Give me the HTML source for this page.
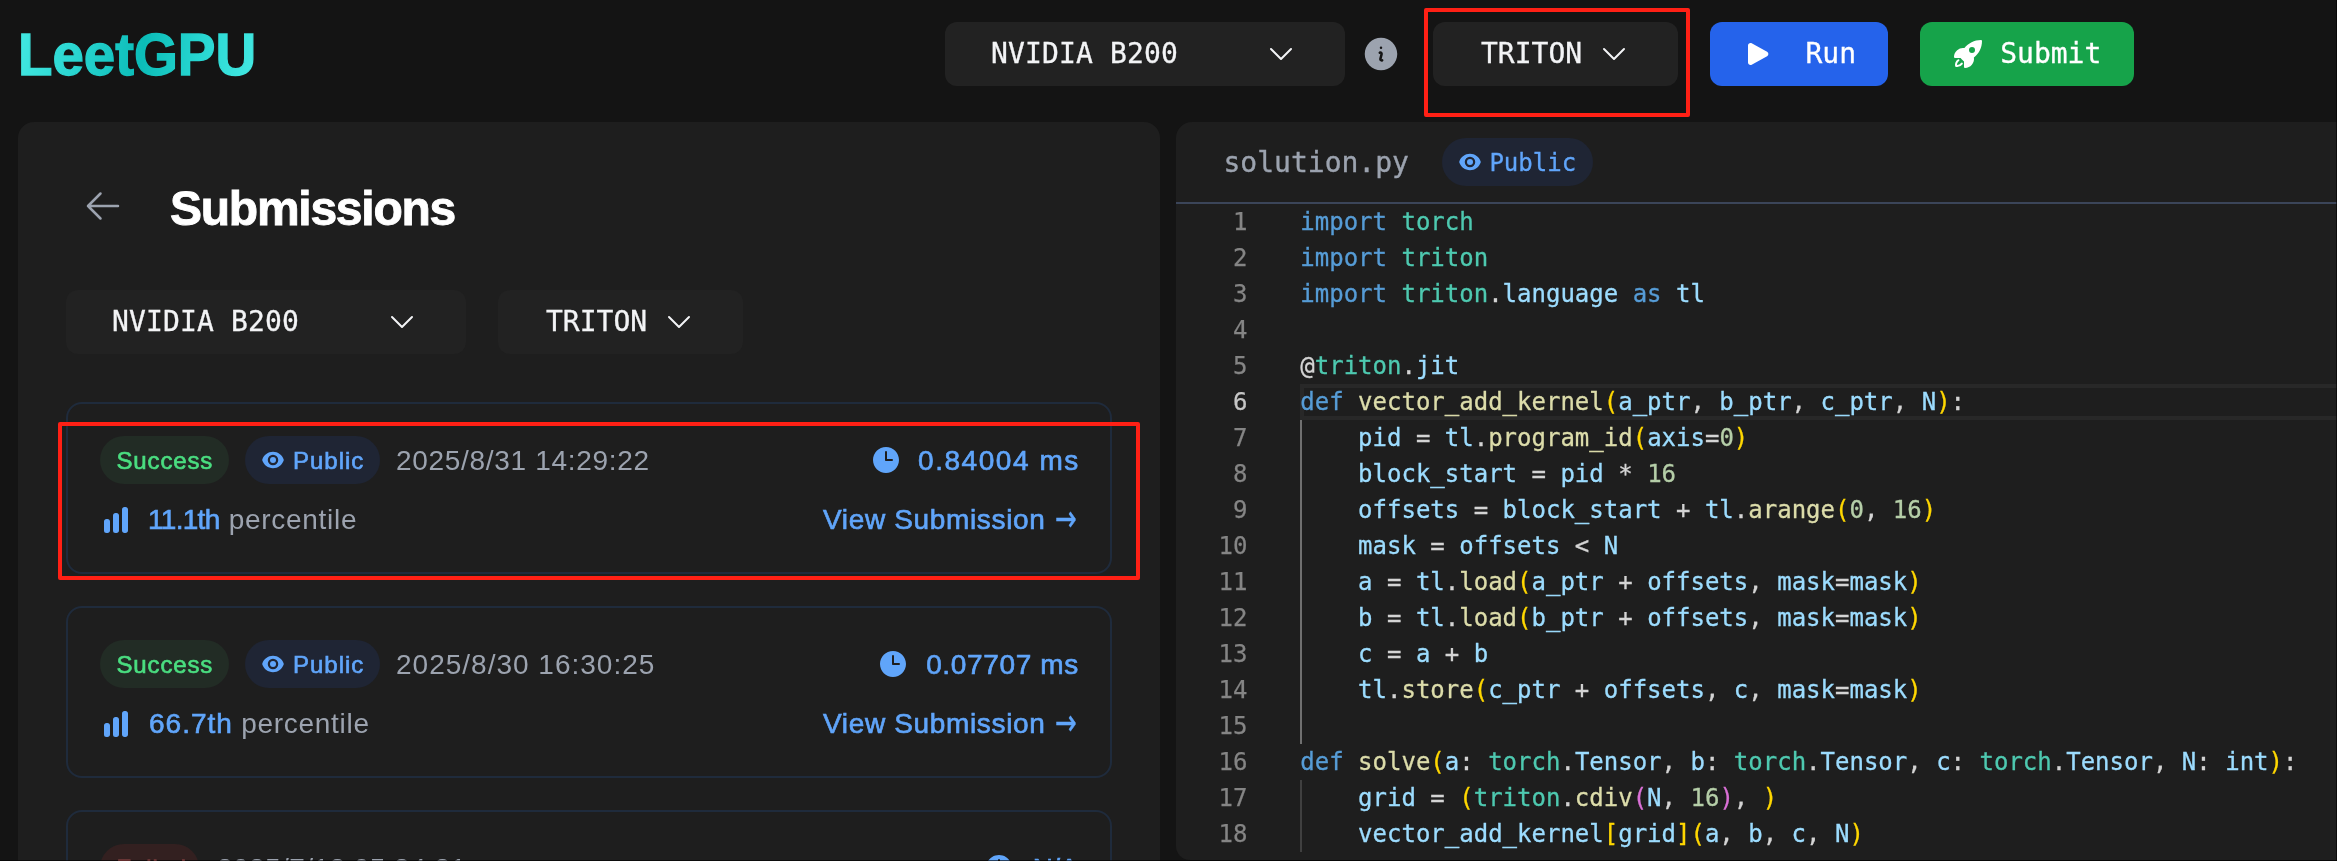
<!DOCTYPE html>
<html lang="en">
<head>
<meta charset="utf-8">
<title>LeetGPU</title>
<style>
*{box-sizing:border-box;margin:0;padding:0}
html,body{width:2338px;height:862px;overflow:hidden;background:#141414}
body{position:relative;will-change:transform;font-family:"Liberation Sans",sans-serif;color:#f3f4f6}
.abs{position:absolute}
.mono{font-family:"DejaVu Sans Mono","Liberation Mono",monospace}
.dd .t,.btn .t{-webkit-text-stroke:.3px currentColor}
.t{position:absolute;white-space:pre;line-height:1}
#logo{left:18.300px;top:21.200px;font-size:59.500px;font-weight:700;line-height:68px;height:68px;
  background:linear-gradient(100deg,#43e8e2 0%,#2ad6d1 25%,#0bbcb8 52%,#27d6d1 75%,#45eae4 100%);
  -webkit-background-clip:text;background-clip:text;color:transparent;-webkit-text-stroke:1.4px transparent;transform-origin:0 0;transform:scaleX(.948)}
.dd{position:absolute;height:64px;border-radius:12px;background:#222222}
.dd .t{font-size:28px;top:18px;color:#f3f4f6}
.dd svg{position:absolute;top:16px;width:32px;height:32px}
.btn{position:absolute;top:22px;height:64px;border-radius:12px}
.btn .t{font-size:28px;top:18px;color:#fff}
.redbox{position:absolute;border:4px solid #ff2015;border-radius:2px}
.panel{position:absolute;background:#1e1e1e}
#left{left:18px;top:122px;width:1142px;height:760px;border-radius:16px}
#right{left:1176px;top:122px;width:1180px;height:738px;border-radius:16px 0 0 14px;overflow:hidden}
h1{position:absolute;left:170px;top:180.7px;font-size:48px;font-weight:700;line-height:56px;color:#fff;letter-spacing:-1.25px;white-space:pre;-webkit-text-stroke:.9px #fff}
.card{position:absolute;left:66px;width:1046px;height:172px;border:2px solid #1f2b3c;border-radius:16px}
.badge{position:absolute;height:48px;border-radius:24px}
.badge .t{font-size:24px;top:12.8px}
.s28{font-size:28px}
.blue{color:#60a5fa}
.gray{color:#9ca3af}
.med{-webkit-text-stroke:.65px currentColor}
.arr{-webkit-text-stroke:.5px currentColor;font-family:"DejaVu Sans",sans-serif;font-size:36px;transform-origin:0 50%;transform:scaleX(.72)}
#code{position:absolute;left:0;top:82px;width:1180px;height:700px}
.ln{-webkit-text-stroke:.25px currentColor;position:absolute;left:0;width:71.500px;text-align:right;font-size:24px;line-height:36px;height:36px;color:#858585}
.cl{position:absolute;left:124.300px;-webkit-text-stroke:.3px currentColor;font-size:24px;line-height:36px;height:36px;white-space:pre;color:#d4d4d4}
.k{color:#569cd6}.m{color:#4ec9b0}.v{color:#9cdcfe}.f{color:#dcdcaa}.n{color:#b5cea8}
.b1{color:#ffd700}.b2{color:#da70d6}
.guide{position:absolute;left:124px;width:2px;background:#404040}
.ln.cur{color:#c6c6c6}
</style>
</head>
<body>
<div id="logo" class="t">LeetGPU</div>
<div class="dd" style="left:945px;top:22px;width:400px">
  <div class="t mono" style="left:46px;letter-spacing:.15px">NVIDIA B200</div>
  <svg style="left:320px" viewBox="0 0 24 24" fill="none" stroke="#f3f4f6" stroke-width="1.5" stroke-linecap="round" stroke-linejoin="round"><path d="M19.5 8.25l-7.500 7.500-7.500-7.500"/></svg>
</div>
<svg class="abs" style="left:1361px;top:34px;width:40px;height:40px" viewBox="0 0 24 24" fill="#9ca3af"><path fill-rule="evenodd" clip-rule="evenodd" d="M2.250 12c0-5.385 4.365-9.750 9.750-9.750s9.750 4.365 9.750 9.750-4.365 9.750-9.750 9.750S2.250 17.385 2.250 12zm8.706-1.442c1.146-.573 2.437.463 2.126 1.706l-.709 2.836.042-.020a.750.750 0 01.670 1.340l-.040.022c-1.147.573-2.438-.463-2.127-1.706l.710-2.836-.042.020a.750.750 0 11-.671-1.340l.041-.022zM12 9a.750.750 0 100-1.500.750.750 0 000 1.500z"/></svg>
<div class="dd" style="left:1433px;top:22px;width:245px">
  <div class="t mono" style="left:48px">TRITON</div>
  <svg style="left:165px" viewBox="0 0 24 24" fill="none" stroke="#f3f4f6" stroke-width="1.5" stroke-linecap="round" stroke-linejoin="round"><path d="M19.5 8.25l-7.500 7.500-7.500-7.500"/></svg>
</div>
<div class="btn" style="left:1710px;width:178px;background:#2563eb">
  <svg class="abs" style="left:31.5px;top:16px;width:32px;height:32px" viewBox="0 0 24 24" fill="#fff"><path d="M4.500 5.653c0-1.426 1.529-2.330 2.779-1.643l11.540 6.348c1.295.712 1.295 2.573 0 3.285L7.280 19.991c-1.250.687-2.779-.217-2.779-1.643V5.653z"/></svg>
  <div class="t mono" style="left:95.500px">Run</div>
</div>
<div class="btn" style="left:1920px;width:214px;background:#16a34a">
  <svg class="abs" style="left:32px;top:16px;width:32px;height:32px" viewBox="0 0 24 24" fill="#fff"><path fill-rule="evenodd" clip-rule="evenodd" d="M9.315 7.584C12.195 3.883 16.695 1.500 21.750 1.500a.750.750 0 01.750.750c0 5.056-2.383 9.555-6.084 12.436A6.750 6.750 0 019.750 22.500a.750.750 0 01-.750-.750v-4.131A15.838 15.838 0 016.382 15H2.250a.750.750 0 01-.750-.750 6.750 6.750 0 017.815-6.666zM15 6.750a2.250 2.250 0 100 4.500 2.250 2.250 0 000-4.500z"/><path d="M5.260 17.242a.750.750 0 10-.897-1.203 5.243 5.243 0 00-2.050 5.022.750.750 0 00.625.627 5.243 5.243 0 005.022-2.051.750.750 0 10-1.202-.897 3.744 3.744 0 01-3.008 1.510c0-1.230.592-2.323 1.510-3.008z"/></svg>
  <div class="t mono" style="left:80.200px">Submit</div>
</div>
<div class="redbox" style="left:1424px;top:8px;width:266px;height:109px"></div>

<div class="panel" id="left"></div>
<svg class="abs" style="left:82.500px;top:186px;width:40px;height:40px" viewBox="0 0 24 24" fill="none" stroke="#9ca3af" stroke-width="1.5" stroke-linecap="round" stroke-linejoin="round"><path d="M10.500 19.500L3 12m0 0l7.500-7.500M3 12h18"/></svg>
<h1>Submissions</h1>
<div class="dd" style="left:66px;top:290px;width:400px">
  <div class="t mono" style="left:46px;letter-spacing:.15px">NVIDIA B200</div>
  <svg style="left:320px" viewBox="0 0 24 24" fill="none" stroke="#f3f4f6" stroke-width="1.5" stroke-linecap="round" stroke-linejoin="round"><path d="M19.5 8.25l-7.500 7.500-7.500-7.500"/></svg>
</div>
<div class="dd" style="left:498px;top:290px;width:245px">
  <div class="t mono" style="left:48px">TRITON</div>
  <svg style="left:165px" viewBox="0 0 24 24" fill="none" stroke="#f3f4f6" stroke-width="1.5" stroke-linecap="round" stroke-linejoin="round"><path d="M19.5 8.25l-7.500 7.500-7.500-7.500"/></svg>
</div>
<div class="card" style="top:402px"></div>
<div class="badge" style="left:100px;top:436px;width:129px;background:#222c25"><div class="t med" style="left:16.500px;color:#4ade80;letter-spacing:.85px">Success</div></div>
<div class="badge" style="left:245px;top:436px;width:135px;background:#1f2534"><svg class="abs" style="left:16px;top:12px;width:24px;height:24px" viewBox="0 0 24 24" fill="#60a5fa"><path d="M12 15a3 3 0 100-6 3 3 0 000 6z"/><path fill-rule="evenodd" clip-rule="evenodd" d="M1.323 11.447C2.811 6.976 7.028 3.750 12.001 3.750c4.970 0 9.185 3.223 10.675 7.690.120.362.120.752 0 1.113-1.487 4.471-5.705 7.697-10.677 7.697-4.970 0-9.186-3.223-10.675-7.690a1.762 1.762 0 010-1.113zM17.250 12a5.250 5.250 0 11-10.500 0 5.250 5.250 0 0110.500 0z"/></svg><div class="t med blue" style="left:48px;letter-spacing:1px">Public</div></div>
<div class="t s28 gray" style="left:396px;top:446.8px;letter-spacing:0.69px">2025/8/31 14:29:22</div>
<svg class="abs" style="left:870px;top:444px;width:32px;height:32px" viewBox="0 0 24 24" fill="#60a5fa"><path fill-rule="evenodd" clip-rule="evenodd" d="M12 2.250c-5.385 0-9.750 4.365-9.750 9.750s4.365 9.750 9.750 9.750 9.750-4.365 9.750-9.750S17.385 2.250 12 2.250zM12.750 6a.750.750 0 00-1.500 0v6c0 .414.336.750.750.750h4.500a.750.750 0 000-1.500h-3.750V6z"/></svg>
<div class="t s28 blue med" style="right:1258.15px;top:446.8px;letter-spacing:1.55px">0.84004 ms</div>
<svg class="abs" style="left:100px;top:504px;width:32px;height:32px" viewBox="0 0 24 24" fill="#60a5fa"><path d="M18.375 2.250c-1.035 0-1.875.840-1.875 1.875v15.750c0 1.035.840 1.875 1.875 1.875h.750c1.036 0 1.875-.840 1.875-1.875V4.125c0-1.036-.840-1.875-1.875-1.875h-.750zM9.750 8.625c0-1.036.840-1.875 1.875-1.875h.750c1.036 0 1.875.840 1.875 1.875v11.250c0 1.035-.840 1.875-1.875 1.875h-.750a1.875 1.875 0 01-1.875-1.875V8.625zM3 13.125c0-1.036.840-1.875 1.875-1.875h.750c1.036 0 1.875.840 1.875 1.875v6.750c0 1.035-.840 1.875-1.875 1.875h-.750A1.875 1.875 0 013 19.875v-6.750z"/></svg>
<div class="t s28 blue med" style="left:148px;top:505.8px;letter-spacing:-0.7px">11.1th</div>
<div class="t s28 gray" style="left:228.8px;top:505.8px;letter-spacing:.7px">percentile</div>
<div class="t s28 blue med" style="left:823px;top:505.8px;letter-spacing:.65px">View Submission</div>
<div class="t blue arr" style="left:1055px;top:501.3px">→</div>
<div class="card" style="top:606px"></div>
<div class="badge" style="left:100px;top:640px;width:129px;background:#222c25"><div class="t med" style="left:16.500px;color:#4ade80;letter-spacing:.85px">Success</div></div>
<div class="badge" style="left:245px;top:640px;width:135px;background:#1f2534"><svg class="abs" style="left:16px;top:12px;width:24px;height:24px" viewBox="0 0 24 24" fill="#60a5fa"><path d="M12 15a3 3 0 100-6 3 3 0 000 6z"/><path fill-rule="evenodd" clip-rule="evenodd" d="M1.323 11.447C2.811 6.976 7.028 3.750 12.001 3.750c4.970 0 9.185 3.223 10.675 7.690.120.362.120.752 0 1.113-1.487 4.471-5.705 7.697-10.677 7.697-4.970 0-9.186-3.223-10.675-7.690a1.762 1.762 0 010-1.113zM17.250 12a5.250 5.250 0 11-10.500 0 5.250 5.250 0 0110.500 0z"/></svg><div class="t med blue" style="left:48px;letter-spacing:1px">Public</div></div>
<div class="t s28 gray" style="left:396px;top:650.8px;letter-spacing:1.0px">2025/8/30 16:30:25</div>
<svg class="abs" style="left:877px;top:648px;width:32px;height:32px" viewBox="0 0 24 24" fill="#60a5fa"><path fill-rule="evenodd" clip-rule="evenodd" d="M12 2.250c-5.385 0-9.750 4.365-9.750 9.750s4.365 9.750 9.750 9.750 9.750-4.365 9.750-9.750S17.385 2.250 12 2.250zM12.750 6a.750.750 0 00-1.500 0v6c0 .414.336.750.750.750h4.500a.750.750 0 000-1.500h-3.750V6z"/></svg>
<div class="t s28 blue med" style="right:1259.05px;top:650.8px;letter-spacing:0.65px">0.07707 ms</div>
<svg class="abs" style="left:100px;top:708px;width:32px;height:32px" viewBox="0 0 24 24" fill="#60a5fa"><path d="M18.375 2.250c-1.035 0-1.875.840-1.875 1.875v15.750c0 1.035.840 1.875 1.875 1.875h.750c1.036 0 1.875-.840 1.875-1.875V4.125c0-1.036-.840-1.875-1.875-1.875h-.750zM9.750 8.625c0-1.036.840-1.875 1.875-1.875h.750c1.036 0 1.875.840 1.875 1.875v11.250c0 1.035-.840 1.875-1.875 1.875h-.750a1.875 1.875 0 01-1.875-1.875V8.625zM3 13.125c0-1.036.840-1.875 1.875-1.875h.750c1.036 0 1.875.840 1.875 1.875v6.750c0 1.035-.840 1.875-1.875 1.875h-.750A1.875 1.875 0 013 19.875v-6.750z"/></svg>
<div class="t s28 blue med" style="left:149px;top:709.8px;letter-spacing:1.0px">66.7th</div>
<div class="t s28 gray" style="left:241.3px;top:709.8px;letter-spacing:.7px">percentile</div>
<div class="t s28 blue med" style="left:823px;top:709.8px;letter-spacing:.65px">View Submission</div>
<div class="t blue arr" style="left:1055px;top:705.3px">→</div>
<div class="card" style="top:810px"></div>
<div class="badge" style="left:100px;top:844px;width:99px;background:#332020"><div class="t med" style="left:16.500px;color:#f87171;letter-spacing:.85px">Failed</div></div>
<div class="t s28 gray" style="left:217px;top:854.8px;letter-spacing:0.45px">2025/7/12 05:34:21</div>
<svg class="abs" style="left:983px;top:852px;width:32px;height:32px" viewBox="0 0 24 24" fill="#60a5fa"><path fill-rule="evenodd" clip-rule="evenodd" d="M12 2.250c-5.385 0-9.750 4.365-9.750 9.750s4.365 9.750 9.750 9.750 9.750-4.365 9.750-9.750S17.385 2.250 12 2.250zM12.750 6a.750.750 0 00-1.500 0v6c0 .414.336.750.750.750h4.500a.750.750 0 000-1.500h-3.750V6z"/></svg>
<div class="t s28 blue med" style="right:1260.2px;top:854.8px;letter-spacing:-0.5px">N/A</div>
<div class="redbox" style="left:58px;top:422px;width:1082px;height:158px"></div>

<div class="panel" id="right">
<div class="t mono" style="left:47.500px;top:26.700px;font-size:28px;color:#9ca3af;-webkit-text-stroke:.35px #9ca3af">solution.py</div>
<div class="badge" style="left:266px;top:16px;width:151px;background:#1f2534"><svg class="abs" style="left:16px;top:12px;width:24px;height:24px" viewBox="0 0 24 24" fill="#60a5fa"><path d="M12 15a3 3 0 100-6 3 3 0 000 6z"/><path fill-rule="evenodd" clip-rule="evenodd" d="M1.323 11.447C2.811 6.976 7.028 3.750 12.001 3.750c4.970 0 9.185 3.223 10.675 7.690.120.362.120.752 0 1.113-1.487 4.471-5.705 7.697-10.677 7.697-4.970 0-9.186-3.223-10.675-7.690a1.762 1.762 0 010-1.113zM17.250 12a5.250 5.250 0 11-10.500 0 5.250 5.250 0 0110.500 0z"/></svg><div class="t mono blue" style="left:47.400px;top:13px;-webkit-text-stroke:.3px #60a5fa">Public</div></div>
<div class="abs" style="left:0;top:80px;width:1180px;height:2px;background:#3b4559"></div>
<div id="code" class="mono">
<div class="abs" style="left:124px;top:180px;width:1060px;height:36px;border:4px solid #282828"></div>
<div class="guide" style="top:216px;height:324px;background:#707070"></div>
<div class="guide" style="top:576px;height:72px"></div>
<div class="ln" style="top:0px">1</div><div class="cl" style="top:0px"><span class="k">import</span> <span class="m">torch</span></div>
<div class="ln" style="top:36px">2</div><div class="cl" style="top:36px"><span class="k">import</span> <span class="m">triton</span></div>
<div class="ln" style="top:72px">3</div><div class="cl" style="top:72px"><span class="k">import</span> <span class="m">triton</span>.<span class="v">language</span> <span class="k">as</span> <span class="v">tl</span></div>
<div class="ln" style="top:108px">4</div><div class="cl" style="top:108px"></div>
<div class="ln" style="top:144px">5</div><div class="cl" style="top:144px">@<span class="m">triton</span>.<span class="v">jit</span></div>
<div class="ln cur" style="top:180px">6</div><div class="cl" style="top:180px"><span class="k">def</span> <span class="f">vector_add_kernel</span><span class="b1">(</span><span class="v">a_ptr</span>, <span class="v">b_ptr</span>, <span class="v">c_ptr</span>, <span class="v">N</span><span class="b1">)</span>:</div>
<div class="ln" style="top:216px">7</div><div class="cl" style="top:216px">    <span class="v">pid</span> = <span class="v">tl</span>.<span class="f">program_id</span><span class="b1">(</span><span class="v">axis</span>=<span class="n">0</span><span class="b1">)</span></div>
<div class="ln" style="top:252px">8</div><div class="cl" style="top:252px">    <span class="v">block_start</span> = <span class="v">pid</span> * <span class="n">16</span></div>
<div class="ln" style="top:288px">9</div><div class="cl" style="top:288px">    <span class="v">offsets</span> = <span class="v">block_start</span> + <span class="v">tl</span>.<span class="f">arange</span><span class="b1">(</span><span class="n">0</span>, <span class="n">16</span><span class="b1">)</span></div>
<div class="ln" style="top:324px">10</div><div class="cl" style="top:324px">    <span class="v">mask</span> = <span class="v">offsets</span> &lt; <span class="v">N</span></div>
<div class="ln" style="top:360px">11</div><div class="cl" style="top:360px">    <span class="v">a</span> = <span class="v">tl</span>.<span class="f">load</span><span class="b1">(</span><span class="v">a_ptr</span> + <span class="v">offsets</span>, <span class="v">mask</span>=<span class="v">mask</span><span class="b1">)</span></div>
<div class="ln" style="top:396px">12</div><div class="cl" style="top:396px">    <span class="v">b</span> = <span class="v">tl</span>.<span class="f">load</span><span class="b1">(</span><span class="v">b_ptr</span> + <span class="v">offsets</span>, <span class="v">mask</span>=<span class="v">mask</span><span class="b1">)</span></div>
<div class="ln" style="top:432px">13</div><div class="cl" style="top:432px">    <span class="v">c</span> = <span class="v">a</span> + <span class="v">b</span></div>
<div class="ln" style="top:468px">14</div><div class="cl" style="top:468px">    <span class="v">tl</span>.<span class="f">store</span><span class="b1">(</span><span class="v">c_ptr</span> + <span class="v">offsets</span>, <span class="v">c</span>, <span class="v">mask</span>=<span class="v">mask</span><span class="b1">)</span></div>
<div class="ln" style="top:504px">15</div><div class="cl" style="top:504px"></div>
<div class="ln" style="top:540px">16</div><div class="cl" style="top:540px"><span class="k">def</span> <span class="f">solve</span><span class="b1">(</span><span class="v">a</span>: <span class="m">torch</span>.<span class="v">Tensor</span>, <span class="v">b</span>: <span class="m">torch</span>.<span class="v">Tensor</span>, <span class="v">c</span>: <span class="m">torch</span>.<span class="v">Tensor</span>, <span class="v">N</span>: <span class="v">int</span><span class="b1">)</span>:</div>
<div class="ln" style="top:576px">17</div><div class="cl" style="top:576px">    <span class="v">grid</span> = <span class="b1">(</span><span class="m">triton</span>.<span class="f">cdiv</span><span class="b2">(</span><span class="v">N</span>, <span class="n">16</span><span class="b2">)</span>, <span class="b1">)</span></div>
<div class="ln" style="top:612px">18</div><div class="cl" style="top:612px">    <span class="v">vector_add_kernel</span><span class="b1">[</span><span class="v">grid</span><span class="b1">]</span><span class="b1">(</span><span class="v">a</span>, <span class="v">b</span>, <span class="v">c</span>, <span class="v">N</span><span class="b1">)</span></div>
</div>
</div>
<div class="abs" style="left:2336px;top:0;width:1px;height:862px;background:rgba(0,0,0,.6)"></div>
<div class="abs" style="left:0;top:860px;width:2338px;height:1px;background:rgba(0,0,0,.6)"></div>
<div class="abs" style="left:2337px;top:0;width:1px;height:862px;background:#fff"></div>
<div class="abs" style="left:0;top:861px;width:2338px;height:1px;background:#fff"></div>

</body>
</html>
